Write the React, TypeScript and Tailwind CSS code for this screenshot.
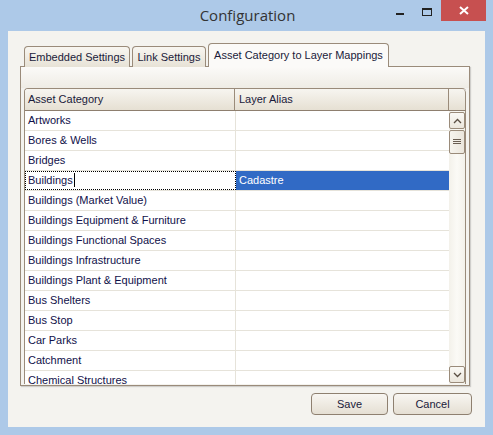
import React from "react";

const rows = [
  "Artworks",
  "Bores & Wells",
  "Bridges",
  "Buildings",
  "Buildings (Market Value)",
  "Buildings Equipment & Furniture",
  "Buildings Functional Spaces",
  "Buildings Infrastructure",
  "Buildings Plant & Equipment",
  "Bus Shelters",
  "Bus Stop",
  "Car Parks",
  "Catchment",
  "Chemical Structures",
];

const font = { fontFamily: '"Liberation Sans", Arial, sans-serif' };

export default function App() {
  return (
    <div
      className="w-[493px] h-[435px] bg-[#adc9e8] flex flex-col overflow-hidden"
      style={font}
    >
      {/* Title bar */}
      <div className="h-[31px] flex items-start relative">
        <div
          className="flex-1 text-center text-[15px] text-[#333] pt-[4px] pl-[2px] whitespace-nowrap"
          style={{ fontFamily: '"Open Sans", "Noto Sans", sans-serif' }}
        >
          Configuration
        </div>
        <div className="absolute right-[7px] top-0 flex items-start">
          <div className="w-[26px] h-[21px] flex items-center justify-center">
            <div className="w-[8px] h-[2px] bg-[#222] mt-[6px]" />
          </div>
          <div className="w-[28px] h-[21px] flex items-center justify-center">
            <div className="w-[10px] h-[8px] border border-[#222] border-t-2 mt-[2px]" />
          </div>
          <div className="w-[45px] h-[21px] bg-[#c75050] flex items-center justify-center">
            <svg width="10" height="9" viewBox="0 0 10 9">
              <path d="M1 1 L9 8 M9 1 L1 8" stroke="#fff" strokeWidth="2" />
            </svg>
          </div>
        </div>
      </div>

      {/* Client area */}
      <div className="mx-[8px] h-[396px] bg-[#f4f3ef] flex flex-col">
        {/* Tabs */}
        <div className="flex items-end h-[35px] pl-[16px] relative z-10 text-[11px] text-[#1a1a3a] whitespace-nowrap">
          <div className="w-[106px] h-[21px] mb-[-1px] border border-[#9a8b7a] border-b-0 rounded-t-[4px] bg-gradient-to-b from-[#f8f6f1] to-[#e7e2d6] flex items-center justify-center">
            Embedded Settings
          </div>
          <div className="w-[74px] h-[21px] mb-[-1px] ml-[2px] border border-[#9a8b7a] border-b-0 rounded-t-[4px] bg-gradient-to-b from-[#f8f6f1] to-[#e7e2d6] flex items-center justify-center">
            Link Settings
          </div>
          <div className="w-[181px] h-[24px] mb-[-1px] ml-[2px] border border-[#9a8b7a] border-b-0 rounded-t-[4px] bg-[#fbfaf8] flex items-center justify-center pb-[1px]">
            Asset Category to Layer Mappings
          </div>
        </div>

        {/* Panel */}
        <div className="ml-[12px] w-[450px] h-[320px] border border-[#9a8b7a] bg-[#f4f3ef] shadow-[1px_1px_1px_rgba(0,0,0,0.15)] flex flex-col px-[3px]">
          <div className="h-[21px] -mx-[3px] bg-gradient-to-b from-[#fbfaf8] to-[#efece5]" />
          {/* Grid */}
          <div className="flex-1 flex flex-col overflow-hidden rounded-tl-[4px] rounded-tr-[4px] border-l border-t border-[#9a8b7a] bg-white mb-[1px]">
            {/* Header */}
            <div className="h-[22px] flex border-b border-[#8e7f6f] bg-gradient-to-b from-[#f7f5f0] to-[#e6e0d3] text-[11px] text-[#1a1a3a] whitespace-nowrap">
              <div className="w-[210px] border-r border-[#9a8b7a] flex items-center pl-[3px]">
                Asset Category
              </div>
              <div className="w-[214px] border-r border-[#9a8b7a] flex items-center pl-[4px]">
                Layer Alias
              </div>
              <div className="flex-1 border-r border-[#9a8b7a] rounded-tr-[4px]" />
            </div>
            {/* Body */}
            <div className="flex-1 flex overflow-hidden">
              <div className="w-[424px] flex flex-col">
                {rows.map((r) => {
                  const sel = r === "Buildings";
                  return (
                    <div
                      key={r}
                      className="h-[20px] shrink-0 flex border-b border-[#e6e3da] text-[11px] text-[#10104a] whitespace-nowrap"
                    >
                      <div
                        className={
                          sel
                            ? "w-[211px] border border-dotted border-black flex items-center pl-[2px] pb-[1px]"
                            : "w-[211px] border-r border-[#e6e3da] flex items-center pl-[3px] pb-[1px]"
                        }
                      >
                        <span>{r}</span>
                        {sel && <span className="w-[1px] h-[14px] bg-black ml-[1px]" />}
                      </div>
                      <div
                        className={
                          sel
                            ? "flex-1 bg-[#316ac5] text-white flex items-center pl-[3px] pb-[1px]"
                            : "flex-1 flex items-center pl-[3px] pb-[1px]"
                        }
                      >
                        {sel ? "Cadastre" : ""}
                      </div>
                    </div>
                  );
                })}
              </div>
              {/* Scrollbar */}
              <div className="w-[17px] bg-gradient-to-r from-[#f3f1ea] via-[#fbfaf6] to-[#f3f1ea] border-r border-[#9a8b7a] flex flex-col">
                <div className="h-[17px] mt-[1px] border border-[#9a8b7a] rounded-[2px] bg-gradient-to-b from-[#faf9f5] to-[#ebe6dc] flex items-center justify-center">
                  <svg width="9" height="6" viewBox="0 0 9 6">
                    <path d="M1 5 L4.5 1.5 L8 5" stroke="#5a4e42" strokeWidth="1.3" fill="none" />
                  </svg>
                </div>
                <div className="h-[24px] mt-[1px] border border-[#9a8b7a] rounded-[2px] bg-gradient-to-r from-[#f6f4ee] to-[#ebe6dc] flex items-center justify-center">
                  <svg width="8" height="6" viewBox="0 0 8 6">
                    <path d="M0 0.5 H8 M0 2.5 H8 M0 4.5 H8" stroke="#6a5e52" strokeWidth="1" />
                  </svg>
                </div>
                <div className="flex-1" />
                <div className="h-[17px] mb-[1px] border border-[#9a8b7a] rounded-[2px] bg-gradient-to-b from-[#faf9f5] to-[#ebe6dc] flex items-center justify-center">
                  <svg width="9" height="6" viewBox="0 0 9 6">
                    <path d="M1 1 L4.5 4.5 L8 1" stroke="#5a4e42" strokeWidth="1.3" fill="none" />
                  </svg>
                </div>
              </div>
            </div>
          </div>
        </div>

        {/* Buttons */}
        <div className="flex justify-end gap-[5px] mt-[7px] pr-[13px] text-[11px] text-[#1a1a3a]">
          <div className="w-[77px] h-[22px] border border-[#8e8070] rounded-[4px] bg-gradient-to-b from-[#f8f6f2] to-[#e5dfd3] flex items-center justify-center">
            Save
          </div>
          <div className="w-[79px] h-[22px] border border-[#8e8070] rounded-[4px] bg-gradient-to-b from-[#f8f6f2] to-[#e5dfd3] flex items-center justify-center">
            Cancel
          </div>
        </div>
      </div>
    </div>
  );
}
